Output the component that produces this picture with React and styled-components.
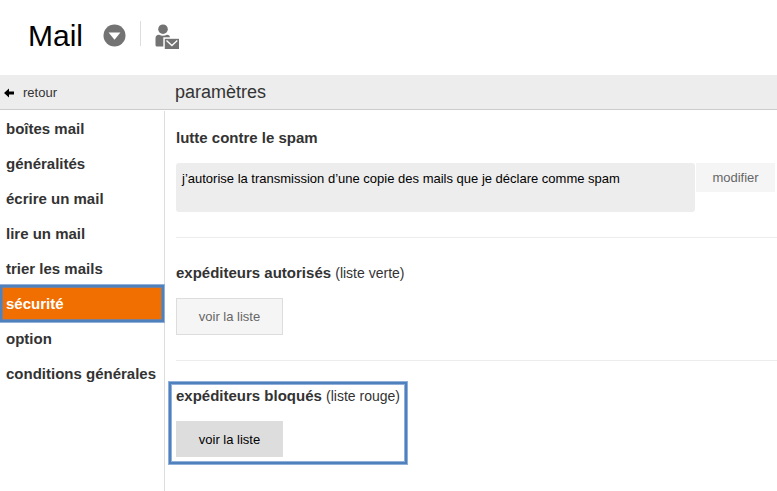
import React from "react";
import styled, { createGlobalStyle, css } from "styled-components";

const GlobalStyle = createGlobalStyle`
  *, *::before, *::after { box-sizing: border-box; }
  body {
    margin: 0;
    background: #fff;
    color: #333;
    font-family: "Liberation Sans", Arial, Helvetica, sans-serif;
    font-size: 14px;
    line-height: 20px;
  }
  h1, h2, h3, p, ul { margin: 0; padding: 0; }
  button { font-family: inherit; cursor: pointer; }
`;

const Page = styled.div`
  display: flex;
  flex-direction: column;
  min-height: 100vh;
`;

const Header = styled.header`
  display: flex;
  align-items: center;
  height: 75px;
  padding: 0 28px 4px;
`;

const AppTitle = styled.h1`
  color: #000;
  font-size: 30px;
  font-weight: 400;
  line-height: 36px;
`;

const IconButton = styled.button`
  display: flex;
  padding: 0;
  border: 0;
  background: none;
  color: #737373;
`;

const MenuButton = styled(IconButton)`
  margin-left: 20px;
`;

const AccountButton = styled(IconButton)`
  margin: 2px 0 0 14px;
`;

const Divider = styled.span`
  width: 1px;
  height: 25px;
  margin: 0 0 4px 14px;
  background: #ddd;
`;

const columns = css`
  display: grid;
  grid-template-columns: 165px minmax(0, 1fr);
`;

const TitleBar = styled.div`
  ${columns}
  align-items: center;
  height: 35px;
  border-bottom: 1px solid #ccc;
  background: #ededed;
`;

const BackLink = styled.a`
  display: flex;
  align-items: center;
  gap: 8px;
  padding: 2px 0 0 4px;
  color: #333;
  font-size: 13px;
  text-decoration: none;
`;

const PageTitle = styled.h2`
  padding-left: 10px;
  font-size: 18px;
  font-weight: 400;
  line-height: 24px;
`;

const Body = styled.div`
  ${columns}
  flex: 1;
`;

const Sidebar = styled.nav`
  margin-top: 1px;
  border-right: 1px solid #ddd;
`;

const NavList = styled.ul`
  list-style: none;
`;

const highlight = css`
  position: relative;
  &::after {
    content: "";
    position: absolute;
    border: 2px solid #4f81bd;
    box-shadow: 0 0 0 1px #91afd9, inset 0 0 0 1px #91afd9;
    pointer-events: none;
  }
`;

const NavItem = styled.li`
  ${(p) => p.$active && css`
    ${highlight}
    &::after {
      inset: -1px 0;
      box-shadow: 0 0 0 1px #91afd9, inset 0 0 0 1px #7d7f93;
    }
  `}
`;

const NavLink = styled.a`
  display: block;
  padding: 8px 6px 7px;
  background: ${(p) => (p.$active ? "#f16e00" : "transparent")};
  color: ${(p) => (p.$active ? "#fff" : "#333")};
  font-size: 15px;
  font-weight: 700;
  text-decoration: none;
  white-space: nowrap;
`;

const Main = styled.main`
  padding-left: 11px;
`;

const Section = styled.section`
  padding: ${(p) => (p.$first ? "18px" : "25px")} 0 25px;
  & + & { border-top: 1px solid #ededed; }
`;

const SectionContent = styled.div`
  width: ${(p) => (p.$highlighted ? "fit-content" : "auto")};
  ${(p) => p.$highlighted && css`
    ${highlight}
    &::after { inset: -4px -7px -7px; }
  `}
`;

const SectionTitle = styled.h3`
  margin-bottom: 15px;
  font-size: 15px;
  font-weight: 700;
`;

const ListName = styled.span`
  font-size: 14px;
  font-weight: 400;
`;

const Setting = styled.div`
  display: flex;
  align-items: flex-start;
  gap: 1px;
  padding-right: 2px;
`;

const SettingText = styled.p`
  flex: 1;
  min-height: 49px;
  padding: 6px;
  border-radius: 3px;
  background: #ededed;
  color: #000;
  font-size: 13px;
`;

const EditButton = styled.button`
  width: 79px;
  height: 29px;
  padding: 0;
  border: 0;
  background: #f5f5f5;
  color: #666;
  font-size: 13px;
`;

const ListButton = styled.button`
  display: block;
  width: 107px;
  height: ${(p) => (p.$dark ? "36px" : "37px")};
  padding: 0;
  border: ${(p) => (p.$dark ? "0" : "1px solid #ddd")};
  background: ${(p) => (p.$dark ? "#ddd" : "#f5f5f5")};
  color: ${(p) => (p.$dark ? "#000" : "#666")};
  font-size: 13px;
`;

const ChevronDisc = () => (
  <svg width="23" height="23" viewBox="0 0 23 23" aria-hidden="true">
    <circle cx="11.5" cy="11.5" r="11" fill="currentColor" />
    <path d="M5.6 8.6h11.8l-5.9 7.2z" fill="#fff" />
  </svg>
);

const AccountIcon = () => (
  <svg width="25" height="26" viewBox="0 0 25 26" aria-hidden="true">
    <circle cx="8" cy="5.2" r="4.8" fill="currentColor" />
    <path
      d="M.5 14.5Q.5 10.800 4 10.800q4 2 8 0 3.200.2 3.200 4V22.500H2Q.5 22.500.5 21z"
      fill="currentColor"
    />
    <path d="M8.300 13.300H25V26H8.300z" fill="#fff" />
    <path d="M9.800 14.800h14.200v10.200H9.800z" fill="currentColor" />
    <path d="m11.500 16.500 5.400 5 5.400-5" fill="none" stroke="#fff" strokeWidth="1.300" />
  </svg>
);

const BackArrow = () => (
  <svg width="11" height="10" viewBox="0 0 11 10" aria-hidden="true">
    <path d="M0 5l5-4.500v3h5v3H5v3z" fill="#000" />
  </svg>
);

const navItems = [
  "boîtes mail",
  "généralités",
  "écrire un mail",
  "lire un mail",
  "trier les mails",
  "sécurité",
  "option",
  "conditions générales",
];

const activeItem = "sécurité";

export default function App() {
  return (
    <Page>
      <GlobalStyle />
      <Header>
        <AppTitle>Mail</AppTitle>
        <MenuButton type="button" aria-label="menu">
          <ChevronDisc />
        </MenuButton>
        <Divider />
        <AccountButton type="button" aria-label="compte mail">
          <AccountIcon />
        </AccountButton>
      </Header>
      <TitleBar>
        <BackLink href="#retour">
          <BackArrow />
          retour
        </BackLink>
        <PageTitle>paramètres</PageTitle>
      </TitleBar>
      <Body>
        <Sidebar>
          <NavList>
            {navItems.map((label) => (
              <NavItem key={label} $active={label === activeItem}>
                <NavLink
                  href="#"
                  $active={label === activeItem}
                  aria-current={label === activeItem ? "page" : undefined}
                >
                  {label}
                </NavLink>
              </NavItem>
            ))}
          </NavList>
        </Sidebar>
        <Main>
          <Section $first>
            <SectionTitle>lutte contre le spam</SectionTitle>
            <Setting>
              <SettingText>
                j’autorise la transmission d’une copie des mails que je déclare comme spam
              </SettingText>
              <EditButton type="button">modifier</EditButton>
            </Setting>
          </Section>
          <Section>
            <SectionContent>
              <SectionTitle>
                expéditeurs autorisés <ListName>(liste verte)</ListName>
              </SectionTitle>
              <ListButton type="button">voir la liste</ListButton>
            </SectionContent>
          </Section>
          <Section>
            <SectionContent $highlighted>
              <SectionTitle>
                expéditeurs bloqués <ListName>(liste rouge)</ListName>
              </SectionTitle>
              <ListButton type="button" $dark>voir la liste</ListButton>
            </SectionContent>
          </Section>
        </Main>
      </Body>
    </Page>
  );
}
